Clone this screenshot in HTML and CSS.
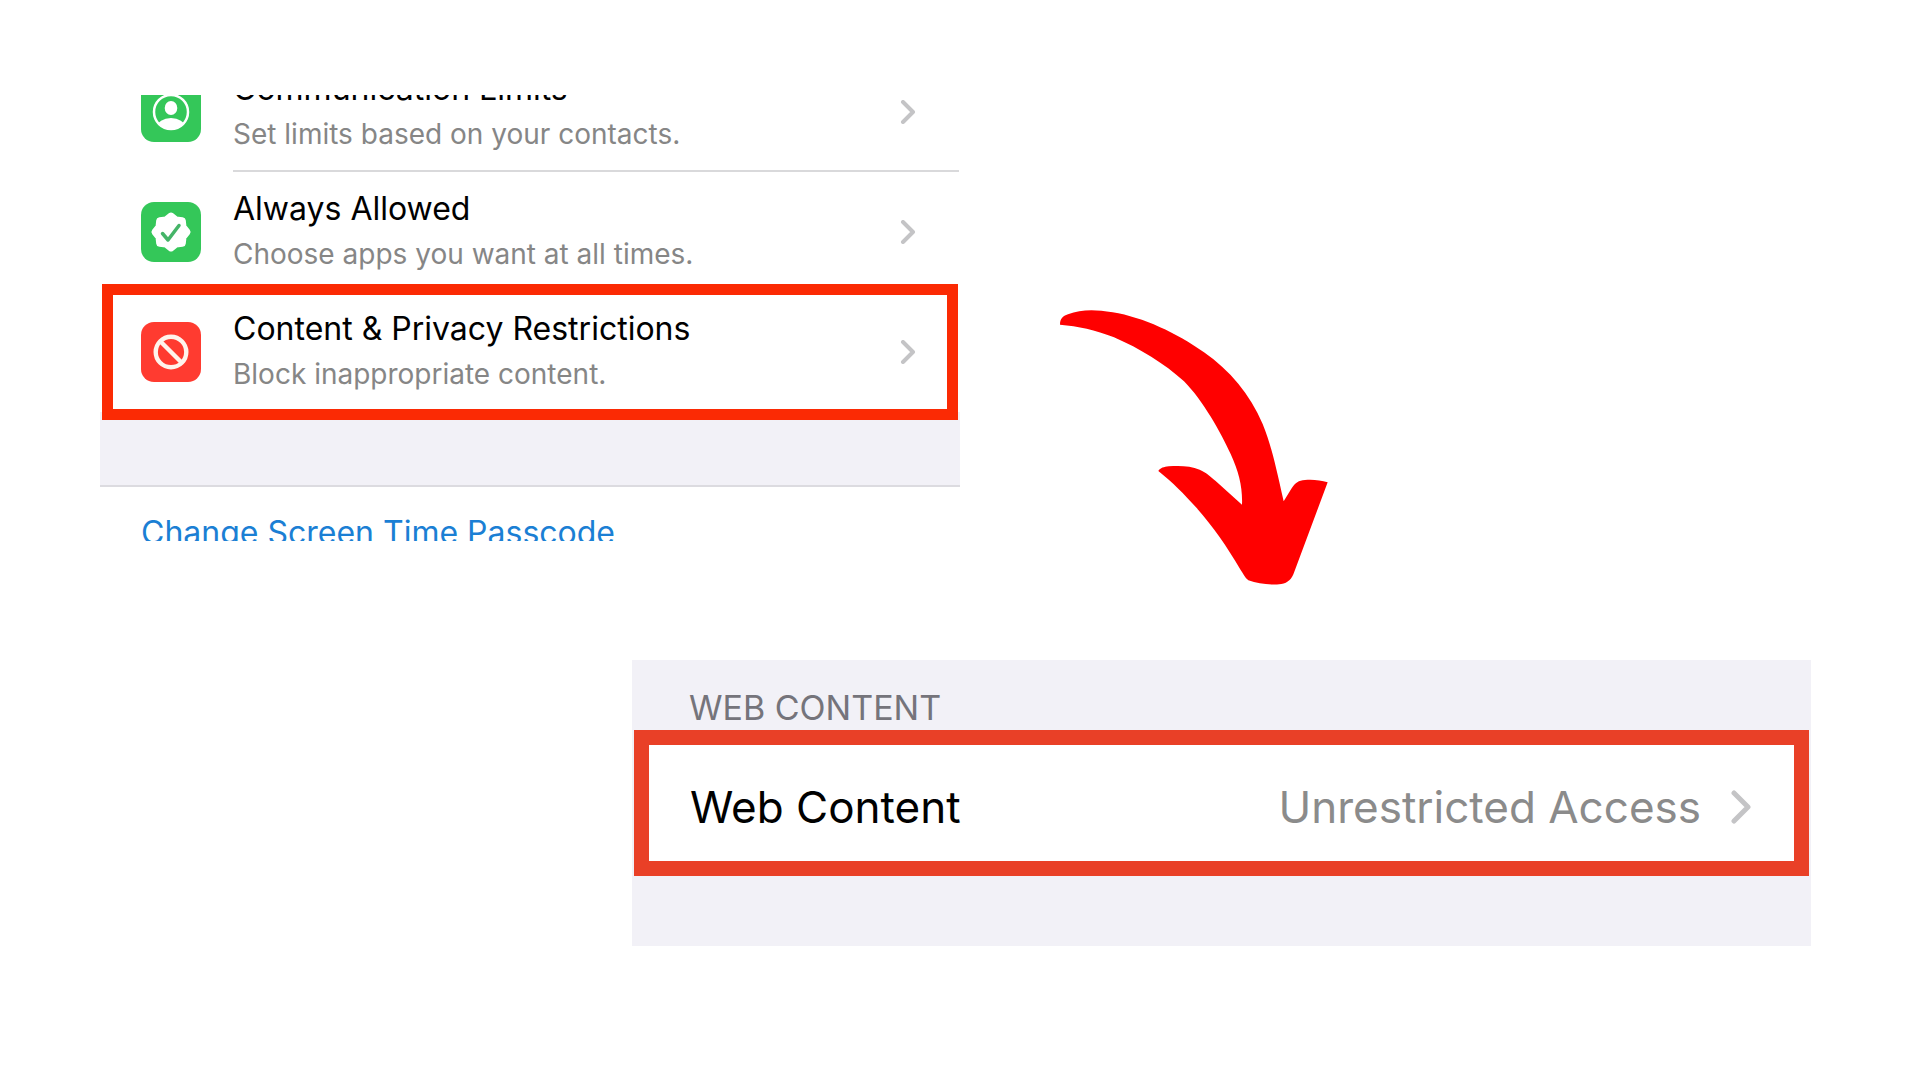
FILE: index.html
```html
<!DOCTYPE html>
<html lang="en">
<head>
    <meta charset="UTF-8">
    <meta name="viewport" content="width=device-width, initial-scale=1.0">
    <title>Content &amp; Privacy Restrictions</title>
    <link rel="stylesheet" href="styles.css">
</head>
<body>
    <main class="steps">
        <section class="panel screen-time">
            <nav class="list">
                <a class="row" href="#communication">
                    <svg class="icon" viewBox="0 0 60 60">
                        <rect width="60" height="60" rx="13" fill="#34c759"/>
                        <clipPath id="face"><circle cx="30" cy="30" r="17"/></clipPath>
                        <circle cx="30" cy="30" r="17" fill="none" stroke="#fff" stroke-width="2.5"/>
                        <g clip-path="url(#face)" fill="#fff">
                            <ellipse cx="30" cy="26" rx="6.3" ry="7"/>
                            <ellipse cx="30" cy="45" rx="14" ry="9"/>
                        </g>
                    </svg>
                    <span class="text divided">
                        <span class="title">Communication Limits</span>
                        <span class="subtitle">Set limits based on your contacts.</span>
                    </span>
                    <svg class="chevron" viewBox="0 0 16 24"><path d="M3 2l10 10L3 22"/></svg>
                </a>
                <a class="row" href="#allowed">
                    <svg class="icon" viewBox="0 0 60 60">
                        <rect width="60" height="60" rx="13" fill="#34c759"/>
                        <path d="M30 14L35 18L41.3 18.7L42 25L46 30L42 35L41.3 41.3L35 42L30 46L25 42L18.7 41.3L18 35L14 30L18 25L18.7 18.7L25 18Z" fill="#fff" stroke="#fff" stroke-width="7" stroke-linejoin="round"/>
                        <path d="M21.500 31.500l5.500 6.500L38 23.500" fill="none" stroke="#45b468" stroke-width="3.500" stroke-linecap="round" stroke-linejoin="round"/>
                    </svg>
                    <span class="text">
                        <span class="title">Always Allowed</span>
                        <span class="subtitle">Choose apps you want at all times.</span>
                    </span>
                    <svg class="chevron" viewBox="0 0 16 24"><path d="M3 2l10 10L3 22"/></svg>
                </a>
                <a class="row marked" href="#web-content">
                    <svg class="icon" viewBox="0 0 60 60">
                        <rect width="60" height="60" rx="13" fill="#ff3b30"/>
                        <g fill="none" stroke="#fff4ec" stroke-width="4.400">
                            <circle cx="30" cy="30" r="15.300"/>
                            <path d="M19.500 19.500l21 21"/>
                        </g>
                    </svg>
                    <span class="text">
                        <span class="title">Content &amp; Privacy Restrictions</span>
                        <span class="subtitle">Block inappropriate content.</span>
                    </span>
                    <svg class="chevron" viewBox="0 0 16 24"><path d="M3 2l10 10L3 22"/></svg>
                </a>
            </nav>
            <div class="spacer"></div>
            <a class="passcode" href="#passcode">Change Screen Time Passcode</a>
        </section>

        <svg class="arrow" viewBox="60 58 804 825">
            <path d="M60 102C60 84 68 77 84 71C122 57 160 55 218 65C310 80 410 127 492 185C570 240 630 310 668 400C692 460 704 510 731 632L755 593C767 575 775 570 795 568C820 566 842 569 863 575L763 843C755 866 744 876 724 880C690 884 655 880 625 869C614 860 609 848 602 838C560 766 518 706 468 650C430 608 400 577 355 541C361 531 372 529 386 527C420 524 452 526 479 537C500 546 512 558 527 571L606 642C608 590 597 545 572 490C544 428 488 328 432 272C372 218 300 174 222 140C165 117 115 107 60 102Z" fill="#f00"/>
        </svg>

        <section class="panel web-content" id="web-content">
            <h2 class="heading">WEB CONTENT</h2>
            <a class="setting" href="#access">
                <span class="name">Web Content</span>
                <span class="value">Unrestricted Access</span>
                <svg class="chevron large" viewBox="0 0 22 34"><path d="M3 3l14 14L3 31"/></svg>
            </a>
        </section>
    </main>
</body>
</html>
```

FILE: styles.css
```css
* {
    box-sizing: border-box;
}

body {
    margin: 0;
    background: #fff;
    font-family: Inter, 'Liberation Sans', sans-serif;
    color: #000;
}

a {
    color: inherit;
    text-decoration: none;
}

/* the two panels overlap in the middle column */
.steps {
    display: grid;
    grid-template-columns: 532fr 328fr 851fr;
    row-gap: 75px;
    padding: 95px 109px 95px 100px;
}

.screen-time {
    grid-column: 1 / 3;
    height: 446px;
    overflow: hidden;
}

/* list is scrolled up, so the first row is cut off */
.list {
    margin-top: -43px;
}

.row {
    position: relative;
    display: flex;
    align-items: center;
    height: 120px;
    padding-left: 41px;
}

.icon {
    flex: none;
    width: 60px;
    height: 60px;
    margin-right: 32px;
}

.text {
    flex: 1;
    display: flex;
    flex-direction: column;
    justify-content: center;
    height: 100%;
    padding-bottom: 2px;
}

.divided {
    box-shadow: inset 0 -2px #d9d9db;
    margin-right: -59px;
    padding-right: 59px;
}

.title {
    font-size: 32px;
    line-height: 46px;
}

.subtitle {
    font-size: 28px;
    line-height: 44px;
    color: #868686;
}

.chevron {
    flex: none;
    width: 16px;
    height: 24px;
    margin-right: 44px;
    fill: none;
    stroke: #c4c4c6;
    stroke-width: 4;
    stroke-linecap: round;
    stroke-linejoin: round;
}

.marked::after {
    content: '';
    position: absolute;
    inset: -8px 2px -8px;
    border: 11px solid #fb2a04;
}

.spacer {
    height: 75px;
    background: #f2f1f7;
    border-bottom: 2px solid #dcdbe0;
}

.passcode {
    display: block;
    padding: 23px 41px;
    font-size: 32px;
    line-height: 46px;
    color: #1b7fd4;
}

.arrow {
    width: 268px;
    height: 275px;
    margin: 215px 0 0 100px;
}

.web-content {
    grid-column: 2 / 4;
    padding: 0 2px 70px;
    background: #f2f1f7;
}

.heading {
    margin: 0;
    padding: 26px 55px 0;
    font-size: 34px;
    font-weight: 400;
    line-height: 44px;
    color: #75747b;
}

.setting {
    display: flex;
    align-items: center;
    height: 146px;
    padding: 8px 41px 0;
    background: #fff;
    border: 15px solid #e94027;
    font-size: 44px;
}

.value {
    margin-left: auto;
    color: #8b8b8b;
}

.large {
    width: 22px;
    height: 34px;
    margin: 0 0 0 30px;
    stroke-width: 5;
}
```
